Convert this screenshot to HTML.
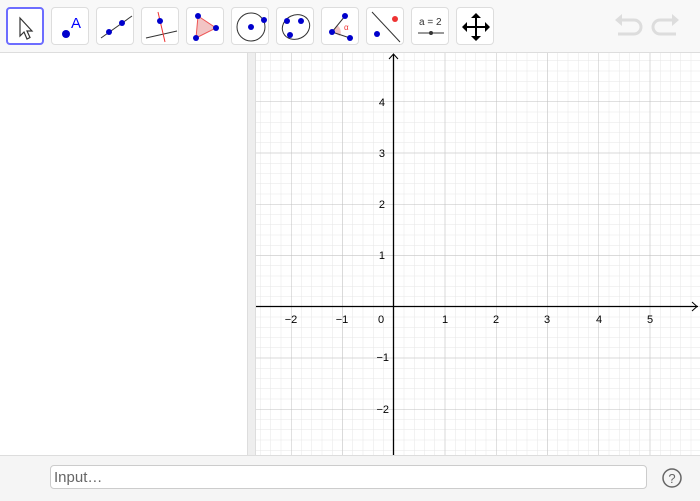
<!DOCTYPE html>
<html><head><meta charset="utf-8"><style>
body{margin:0;width:700px;height:500px;overflow:hidden;background:#fff;font-family:"Liberation Sans",sans-serif;position:relative}
.tb{position:absolute;left:0;top:0;width:700px;height:52px;background:#f8f8f8;border-bottom:1px solid #ddd}
.b{position:absolute;top:7px;width:38px;height:38px;background:#fff;border:1px solid #ddd;border-radius:4px;box-sizing:border-box}
.b svg{position:absolute;left:0;top:0}
.sel{border:2px solid #6d6dff}
.bot{position:absolute;left:0;top:455px;width:700px;height:45px;background:#f5f5f5;border-top:1px solid #ddd}
.inp{position:absolute;left:50px;top:9px;width:597px;height:24px;background:#fff;border:1px solid #ccc;border-radius:4px;font-size:15px;color:#666;line-height:24px;padding-left:3px;box-sizing:border-box}
</style></head><body>
<div class="tb">
<div class="b sel" style="left:6px"><svg width="38" height="38"><path d="M12 9 L12 27 L16 23 L19 30 L22 28.5 L19 22 L24 22 Z" fill="#fff" stroke="#333" stroke-width="1.2"/></svg></div>
<div class="b" style="left:51px"><svg width="38" height="38"><circle cx="14" cy="26" r="4" fill="#00c"/><text x="19" y="20" font-size="15" fill="#00f" font-family="Liberation Sans">A</text></svg></div>
<div class="b" style="left:96px"><svg width="38" height="38"><line x1="4" y1="30" x2="35" y2="8" stroke="#333"/><circle cx="12" cy="24" r="3" fill="#00c"/><circle cx="25" cy="15" r="3" fill="#00c"/></svg></div>
<div class="b" style="left:141px"><svg width="38" height="38"><line x1="4" y1="30" x2="35" y2="23" stroke="#333"/><line x1="16" y1="4" x2="23" y2="34" stroke="#e33"/><circle cx="18" cy="13" r="3" fill="#00c"/></svg></div>
<div class="b" style="left:186px"><svg width="38" height="38"><path d="M11 8 L29 20 L9 30 Z" fill="#f2c4c4" stroke="#e55"/><circle cx="11" cy="8" r="3" fill="#00c"/><circle cx="29" cy="20" r="3" fill="#00c"/><circle cx="9" cy="30" r="3" fill="#00c"/></svg></div>
<div class="b" style="left:231px"><svg width="38" height="38"><circle cx="19" cy="19" r="14" fill="none" stroke="#333"/><circle cx="19" cy="19" r="3" fill="#00c"/><circle cx="32" cy="12" r="3" fill="#00c"/></svg></div>
<div class="b" style="left:276px"><svg width="38" height="38"><ellipse cx="19" cy="19" rx="14" ry="12" transform="rotate(-25 19 19)" fill="none" stroke="#333"/><circle cx="10" cy="13" r="3" fill="#00c"/><circle cx="24" cy="13" r="3" fill="#00c"/><circle cx="13" cy="27" r="3" fill="#00c"/></svg></div>
<div class="b" style="left:321px"><svg width="38" height="38"><path d="M10 24 L18 28 A9 9 0 0 0 15 17 Z" fill="#f2c4c4"/><path d="M23 8 L10 24 L28 30" fill="none" stroke="#333"/><text x="22" y="22" font-size="8" fill="#e33">α</text><circle cx="23" cy="8" r="3" fill="#00c"/><circle cx="10" cy="24" r="3" fill="#00c"/><circle cx="28" cy="30" r="3" fill="#00c"/></svg></div>
<div class="b" style="left:366px"><svg width="38" height="38"><line x1="5" y1="4" x2="33" y2="34" stroke="#333"/><circle cx="28" cy="11" r="3" fill="#e33"/><circle cx="10" cy="26" r="3" fill="#00c"/></svg></div>
<div class="b" style="left:411px"><svg width="38" height="38"><text x="7" y="17" font-size="10" fill="#333" font-family="Liberation Sans">a = 2</text><line x1="6" y1="25" x2="32" y2="25" stroke="#333"/><circle cx="19" cy="25" r="2" fill="#333"/></svg></div>
<div class="b" style="left:456px"><svg width="38" height="38"><path d="M19 6 V32 M6 19 H32" stroke="#000" stroke-width="2"/><path d="M19 5 L14 10 H24Z M19 33 L14 28 H24Z M5 19 L10 14 V24Z M33 19 L28 14 V24Z" fill="#000"/></svg></div>
<svg style="position:absolute;left:612px;top:12px" width="70" height="28"><path d="M8 8 H22 A7 7 0 0 1 22 22 H6" fill="none" stroke="#ddd" stroke-width="3"/><path d="M3 8 L10 2 V14Z" fill="#ddd"/><path d="M62 8 H48 A7 7 0 0 0 48 22 H64" fill="none" stroke="#ddd" stroke-width="3"/><path d="M67 8 L60 2 V14Z" fill="#ddd"/></svg>
</div>
<div style="position:absolute;left:247px;top:53px;width:7px;height:402px;background:#eee;border-left:1px solid #ddd;border-right:1px solid #ddd"></div>
<svg style="position:absolute;left:0;top:0" width="700" height="500">
<defs>
<pattern id="mi" patternUnits="userSpaceOnUse" x="393.5" y="306.5" width="10.25" height="10.25"><path d="M0 0 V10.25 M0 0 H10.25" stroke="#e6e6e6" stroke-width="1" fill="none"/></pattern>
<pattern id="ma" patternUnits="userSpaceOnUse" x="393.5" y="306.5" width="51.25" height="51.25"><path d="M0 0 V51.25 M0 0 H51.25" stroke="#c0c0c0" stroke-width="1" fill="none"/></pattern>
</defs>
<rect x="256" y="53" width="444" height="402" fill="url(#mi)"/>
<rect x="256" y="53" width="444" height="402" fill="url(#ma)"/>
<line x1="256" y1="306.5" x2="698" y2="306.5" stroke="#000" stroke-width="1.3"/>
<line x1="393.5" y1="55" x2="393.5" y2="455" stroke="#000" stroke-width="1.3"/>
<path d="M389 59 L393.5 54 L398 59 M692 302 L697 306.5 L692 311" fill="none" stroke="#000"/>
<g font-size="11" fill="#000" font-family="Liberation Sans" text-anchor="middle">
<text x="291" y="323">−2</text><text x="342" y="323">−1</text><text x="381" y="323">0</text>
<text x="445" y="323">1</text><text x="496" y="323">2</text><text x="547" y="323">3</text><text x="599" y="323">4</text><text x="650" y="323">5</text>
</g>
<g font-size="11" fill="#000" font-family="Liberation Sans" text-anchor="end">
<text x="385" y="106">4</text><text x="385" y="157">3</text><text x="385" y="208">2</text><text x="385" y="259">1</text><text x="389" y="361">−1</text><text x="389" y="413">−2</text>
</g>
</svg>
<div class="bot"><div class="inp">Input…</div>
<svg style="position:absolute;left:660px;top:10px" width="24" height="24"><circle cx="12" cy="12" r="9" fill="none" stroke="#666" stroke-width="1.5"/><text x="12" y="17" font-size="13" text-anchor="middle" fill="#666" font-family="Liberation Sans">?</text></svg>
</div>
</body></html>
